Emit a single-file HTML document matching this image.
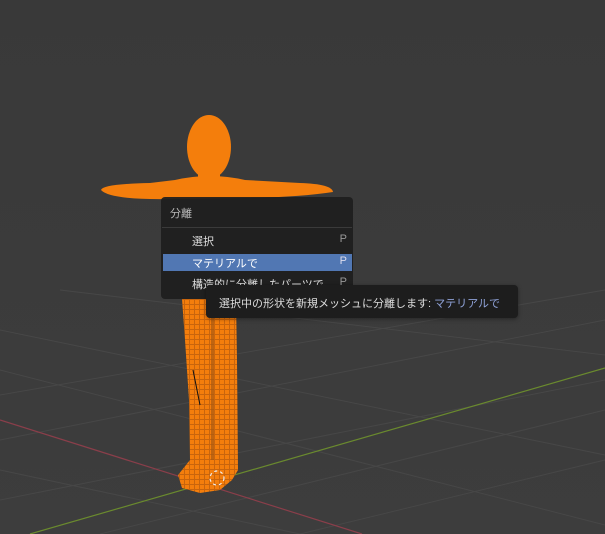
<!DOCTYPE html>
<html><head><meta charset="utf-8"><style>
body{margin:0;width:605px;height:534px;overflow:hidden;background:#3b3b3b;font-family:"Liberation Sans","Noto Sans CJK JP",sans-serif;position:relative}
svg{position:absolute;left:0;top:0}
.menu{position:absolute;left:161px;top:197px;width:192px;height:102px;background:rgba(30,30,30,0.93);border-radius:4px}
.t{position:absolute;font-size:11px;color:#ddd;white-space:nowrap}
.tip{position:absolute;left:206px;top:285px;width:312px;height:33px;background:#1d1d1d;border-radius:4px;box-shadow:0 1px 4px rgba(0,0,0,.4)}
</style></head><body>
<svg width="605" height="534">
<defs><linearGradient id="bg" x1="0" y1="0" x2="0" y2="1"><stop offset="0" stop-color="#393939"/><stop offset="1" stop-color="#3d3d3d"/></linearGradient>
<pattern id="dots" width="5" height="5" patternUnits="userSpaceOnUse"><rect width="5" height="5" fill="#c8650d"/><rect width="4" height="4" fill="#f47e0c"/></pattern></defs>
<rect width="605" height="534" fill="url(#bg)"/>
<g stroke="#474747" stroke-width="1" fill="none">
<line x1="0" y1="330" x2="605" y2="455"/>
<line x1="0" y1="370" x2="605" y2="525"/><line x1="60" y1="290" x2="605" y2="355"/>
<line x1="0" y1="470" x2="300" y2="534"/>
<line x1="0" y1="395" x2="605" y2="290"/>
<line x1="0" y1="440" x2="605" y2="320"/><line x1="0" y1="500" x2="605" y2="380"/>
<line x1="100" y1="534" x2="605" y2="410"/><line x1="300" y1="534" x2="605" y2="460"/>
</g>
<line x1="0" y1="420" x2="362" y2="534" stroke="#8a3e4a" stroke-width="1.2"/>
<line x1="30" y1="534" x2="605" y2="368" stroke="#6a8a2e" stroke-width="1.2"/>
<g fill="#f47e0c">
<ellipse cx="209" cy="147" rx="22" ry="32"/>
<rect x="198" y="165" width="22" height="20"/>
<path d="M101 190 Q102 184 150 183 L175 180 Q210 172 245 180 L300 183 Q332 184 333 192 Q300 197 250 198 L170 199 Q110 200 101 190Z"/>
</g>
<path fill="url(#dots)" d="M182 299 L236 299 L237 360 L238 470 L232 480 L220 490 L200 493 L182 488 L178 475 L190 460 L189 400 L185 340Z"/>
<rect x="211" y="300" width="3" height="160" fill="#a85a12" opacity=".7"/>
<line x1="193" y1="370" x2="200" y2="405" stroke="#111" stroke-width="1"/>
<circle cx="217" cy="478" r="7" fill="none" stroke="#eee" stroke-width="1.2" stroke-dasharray="3 3"/>
</svg>
<div class="menu">
<div class="t" style="left:9px;top:8px;color:#bbb">分離</div>
<div style="position:absolute;left:1px;right:1px;top:30px;height:1px;background:#3a3a3a"></div>
<div class="t" style="left:31px;top:36px">選択</div><div class="t" style="right:6px;top:36px;color:#999">P</div>
<div style="position:absolute;left:2px;width:189px;top:57px;height:17px;background:#5177b3"></div>
<div class="t" style="left:31px;top:58px;color:#fff">マテリアルで</div><div class="t" style="right:6px;top:58px;color:#dde">P</div>
<div class="t" style="left:31px;top:79px">構造的に分離したパーツで</div><div class="t" style="right:6px;top:79px;color:#999">P</div>
</div>
<div class="tip"><div class="t" style="left:13px;top:10px;color:#ddd">選択中の形状を新規メッシュに分離します: <span style="color:#8fa2d8">マテリアルで</span></div></div>
</body></html>
